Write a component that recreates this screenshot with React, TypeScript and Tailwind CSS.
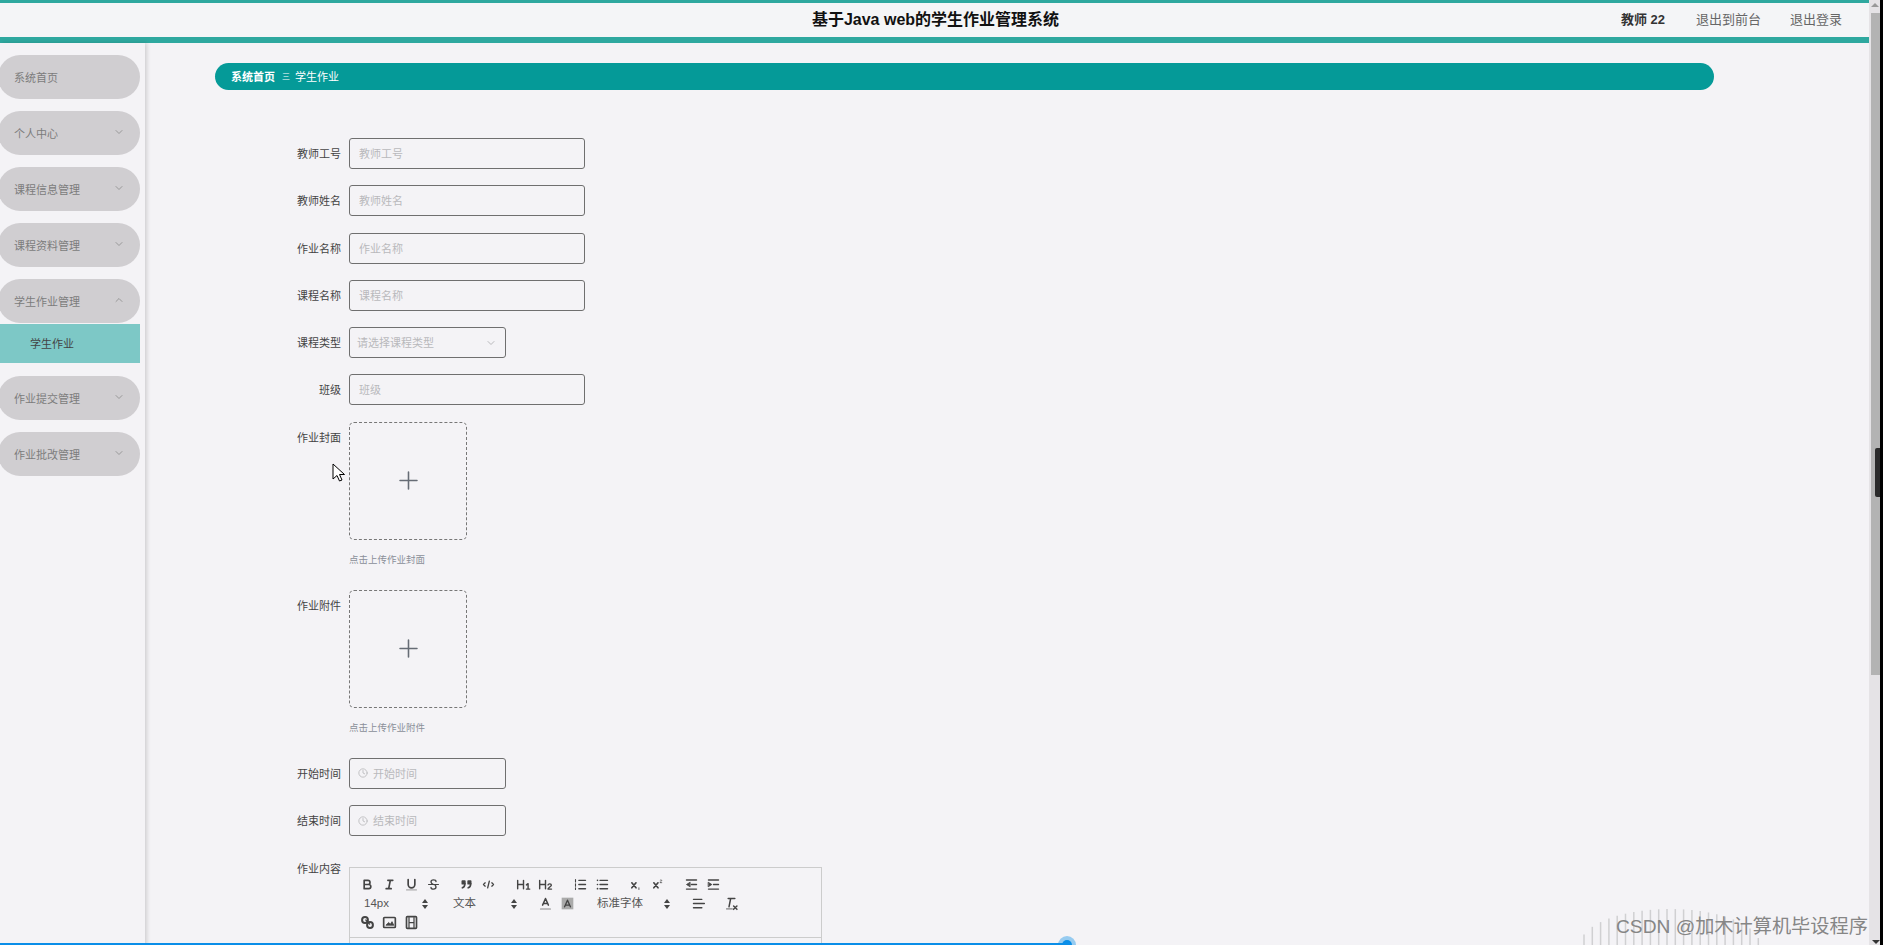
import { ChevronDown, ChevronUp, Clock, Plus } from 'lucide-react';
import type { ReactNode } from 'react';

const cjk = { fontFamily: '"Liberation Sans", "Noto Sans CJK SC", sans-serif' };

const menus = [
  { label: '系统首页' },
  { label: '个人中心', arrow: true },
  { label: '课程信息管理', arrow: true },
  { label: '课程资料管理', arrow: true },
  { label: '学生作业管理', arrow: true, open: true, sub: '学生作业' },
  { label: '作业提交管理', arrow: true },
  { label: '作业批改管理', arrow: true },
];

function Ico({ children }: { children: ReactNode }) {
  return (
    <span className="flex h-[19px] w-[22px] items-center justify-center">
      <svg
        viewBox="0 0 18 18"
        className="h-[15px] w-[15px]"
        fill="none"
        stroke="#444"
        strokeWidth="2"
        strokeLinecap="round"
        strokeLinejoin="round"
      >
        {children}
      </svg>
    </span>
  );
}

function Group({ children, gap = 'mr-[11px]' }: { children: ReactNode; gap?: string }) {
  return <div className={`flex items-center ${gap}`}>{children}</div>;
}

function Picker({ label, w }: { label: string; w: string }) {
  return (
    <div className={`mr-[11px] flex h-[19px] items-center justify-between pl-2 pr-[6px] text-[11.5px] text-[#555] ${w}`}>
      <span>{label}</span>
      <svg viewBox="0 0 6 10" className="h-[10px] w-[6px]" fill="#444">
        <path d="M3 0 6 4H0zM3 10 0 6h6z" />
      </svg>
    </div>
  );
}

function FormRow({ label, children }: { label: string; children: ReactNode }) {
  return (
    <div className="mb-[16.3px] flex">
      <div className="h-[31px] w-[134px] pr-[8px] text-right text-[11px] leading-[33px] text-[#444]">{label}</div>
      {children}
    </div>
  );
}

function TextInput({ label }: { label: string }) {
  return (
    <FormRow label={label}>
      <input
        placeholder={label}
        className="h-[31px] w-[236px] rounded-[3px] border border-[#6f6f6f] bg-transparent px-[9px] pt-px text-[11px] outline-none placeholder:text-[#b9b9bc]"
      />
    </FormRow>
  );
}

function DateInput({ label }: { label: string }) {
  return (
    <FormRow label={label}>
      <div className="flex h-[31px] w-[157px] items-center rounded-[3px] border border-[#6f6f6f] pl-[8px] text-[11px] text-[#b9b9bc]">
        <Clock size={10} />
        <span className="ml-[5px] pt-px">{label}</span>
      </div>
    </FormRow>
  );
}

function Upload({ label, hint }: { label: string; hint: string }) {
  return (
    <div className="mb-[16px] flex h-[152px]">
      <div className="h-[31px] w-[134px] pr-[8px] text-right text-[11px] leading-[33px] text-[#444]">{label}</div>
      <div>
        <div className="flex h-[118px] w-[118px] items-center justify-center rounded-[5px] border border-dashed border-[#777]">
          <Plus size={29} strokeWidth={1.3} className="text-[#666c75]" />
        </div>
        <div className="mt-[13px] text-[9.5px] leading-[14px] text-[#8a8f99]">{hint}</div>
      </div>
    </div>
  );
}

function Toolbar() {
  return (
    <div className="h-[70px] border-b border-[#ccc] pl-[6px] pt-[7px]">
      <div className="flex">
        <Group>
          <Ico>
            <path d="M5 4h4.5a2.5 2.5 0 0 1 0 5H5zM5 9h5.5a2.5 2.5 0 0 1 0 5H5z" />
          </Ico>
          <Ico>
            <path d="M7 4h6M5 14h6M8 14l2-10" />
          </Ico>
          <Ico>
            <path d="M5 3v6a4 4 0 0 0 8 0V3" />
            <path d="M3 15.5h12" strokeWidth="1" stroke="#888" />
          </Ico>
          <Ico>
            <path d="M3 9h12" strokeWidth="1.2" />
            <path d="M12 5.5C12 4 10.5 3.5 9 3.5S6 4.2 6 6c0 1 .7 2 3 3M6 12.5c0 1.5 1.5 2 3 2s3-.8 3-2.5c0-1-.4-1.6-1-2" strokeWidth="1.6" />
          </Ico>
        </Group>
        <Group gap="mr-[13px]">
          <Ico>
            <rect x="4" y="5" width="3" height="3" fill="#444" />
            <rect x="11" y="5" width="3" height="3" fill="#444" />
            <path d="M7 8c0 4-3 5-3 5M14 8c0 4-3 5-3 5" />
          </Ico>
          <Ico>
            <path d="M5 7 3 9l2 2M13 7l2 2-2 2M10 5 8 13" strokeWidth="1.6" />
          </Ico>
        </Group>
        <Group gap="mr-[13px]">
          <Ico>
            <path d="M2 4v10M9 4v10M2 9h7M12.5 9.5 14.5 8v6.5M12.5 14.5h4" strokeWidth="1.7" />
          </Ico>
          <Ico>
            <path d="M2 4v10M9 4v10M2 9h7M12 9.5c.5-1.7 4-1.7 4 .3 0 1.7-4 2.7-4 4.7h4.2" strokeWidth="1.7" />
          </Ico>
        </Group>
        <Group gap="mr-[9px]">
          <Ico>
            <path d="M7 4h8M7 9h8M7 14h8" strokeWidth="1.7" />
            <path d="M3 3v3M3 8v3M3 13v2" strokeWidth="1.3" />
          </Ico>
          <Ico>
            <path d="M6 4h9M6 9h9M6 14h9" strokeWidth="1.7" />
            <path d="M3 4h.01M3 9h.01M3 14h.01" />
          </Ico>
        </Group>
        <Group gap="mr-[14px]">
          <Ico>
            <path d="M7 7l5 6M12 7l-5 6" strokeWidth="2" />
            <path d="M15.5 13v2" strokeWidth="1" />
          </Ico>
          <Ico>
            <path d="M7 7l5 6M12 7l-5 6" strokeWidth="2" />
            <path d="M14.5 4c.6-.8 2-.5 2 .3 0 .8-2 1.2-2 2.5h2" strokeWidth="0.9" />
          </Ico>
        </Group>
        <Group>
          <Ico>
            <path d="M3 3.5h12M3 14.5h12M9 9h6" strokeWidth="1.7" />
            <path d="M7 6.5 3 9l4 2.5z" fill="#444" strokeWidth="1" />
          </Ico>
          <Ico>
            <path d="M3 3.5h12M3 14.5h12M9 9h6" strokeWidth="1.7" />
            <path d="M3 6.5 7 9l-4 2.5z" fill="#444" strokeWidth="1" />
          </Ico>
        </Group>
      </div>
      <div className="flex">
        <Picker label="14px" w="w-[78px]" />
        <Picker label="文本" w="w-[78px]" />
        <Group>
          <Ico>
            <path d="M5.5 11 9 3l3.5 8M6.4 9h5.200" strokeWidth="1.8" />
            <path d="M3 15.5h12" strokeWidth="1.3" stroke="#888" />
          </Ico>
          <Ico>
            <rect x="2" y="2" width="14" height="14" fill="#aaa" stroke="none" />
            <path d="M5.5 13 9 5l3.5 8M6.4 11h5.200" strokeWidth="1.6" />
          </Ico>
        </Group>
        <Picker label="标准字体" w="w-[87px]" />
        <Group>
          <Ico>
            <path d="M3 4h10M3 9h13M3 14h10" strokeWidth="1.7" />
          </Ico>
        </Group>
        <Group>
          <Ico>
            <path d="M5 3h8M8 3 6 13" strokeWidth="1.8" />
            <path d="M3 15.5h7" strokeWidth="1" />
            <path d="M11.5 12l4 4M15.5 12l-4 4" strokeWidth="1.8" />
          </Ico>
        </Group>
      </div>
      <div className="flex">
        <Ico>
          <path d="M7 6 11.5 11" strokeWidth="1.5" />
          <circle cx="6" cy="6" r="3.5" strokeWidth="2.4" />
          <circle cx="12" cy="12" r="3.5" strokeWidth="2.4" />
        </Ico>
        <Ico>
          <rect x="2" y="3" width="14" height="12" rx="1" />
          <path d="M5 12l3-3 2 2 2-3 2 4z" fill="#444" strokeWidth="1" />
        </Ico>
        <Ico>
          <rect x="3" y="2" width="12" height="14" rx="1" />
          <path d="M6 3v12M12 3v12M6 9h6" strokeWidth="1.5" />
        </Ico>
      </div>
    </div>
  );
}

export default function App() {
  const bars = Array.from({ length: 22 }, (_, i) => {
    const x = 4 + i * 8.3;
    const d = (x - 90) / 90;
    return { x, h: 36 * Math.sqrt(Math.max(0, 1 - d * d)) };
  });

  return (
    <div className="relative flex h-[945px] w-[1883px] overflow-hidden bg-[#f4f3f6]" style={cjk}>
      <div className="flex w-[1869px] flex-col">
        <header className="grid h-[43px] shrink-0 grid-cols-[1fr_auto_1fr] items-center border-t-[3px] border-b-[6px] border-[#2ea89f] bg-[#f4f5f7]">
          <div />
          <div className="pl-[2px] text-base font-bold text-[#111]">基于Java web的学生作业管理系统</div>
          <div className="flex justify-end pr-[27px] text-[13px]">
            <span className="mr-[31px] font-bold text-[#333]">教师 22</span>
            <span className="mr-[29px] text-[#666]">退出到前台</span>
            <span className="text-[#666]">退出登录</span>
          </div>
        </header>
        <div className="flex flex-1">
          <aside className="w-[145px] shrink-0 pt-[12px] shadow-[2px_0_4px_rgba(0,0,0,0.15)]">
            {menus.map((m) => (
              <div key={m.label}>
                <div className="mb-[12px] -ml-[2px] flex h-[44px] w-[142px] items-center justify-between rounded-[22px] bg-[#d0ced1] pl-[16px] pr-[15px] text-[11px] text-[#7c7c7c]">
                  <span className="pt-[2px]">{m.label}</span>
                  {m.arrow && (m.open ? <ChevronUp size={12} className="mb-[3px] text-[#999]" /> : <ChevronDown size={12} className="mb-[3px] text-[#999]" />)}
                </div>
                {m.sub && (
                  <div className="-mt-[11px] mb-[13px] flex h-[39px] w-[140px] items-center bg-[#7dc8c6] pl-[30px] pt-[2px] text-[11px] text-[#444]">
                    {m.sub}
                  </div>
                )}
              </div>
            ))}
          </aside>
          <main className="flex-1 pl-[70px] pt-[20px]">
            <div className="flex h-[27px] w-[1499px] items-center rounded-[14px] bg-[#059a98] pl-[16px] text-[11px] text-white">
              <span className="pt-px font-bold">系统首页</span>
              <span className="ml-[7px] mr-[5px] text-[8px]">三</span>
              <span className="pt-px">学生作业</span>
            </div>
            <form className="pt-[48px]">
              <TextInput label="教师工号" />
              <TextInput label="教师姓名" />
              <TextInput label="作业名称" />
              <TextInput label="课程名称" />
              <FormRow label="课程类型">
                <div className="flex h-[31px] w-[157px] items-center justify-between rounded-[3px] border border-[#6f6f6f] pl-[7px] pr-[8px] text-[11px] text-[#b9b9bc]">
                  <span className="pt-px">请选择课程类型</span>
                  <ChevronDown size={12} />
                </div>
              </FormRow>
              <TextInput label="班级" />
              <Upload label="作业封面" hint="点击上传作业封面" />
              <Upload label="作业附件" hint="点击上传作业附件" />
              <DateInput label="开始时间" />
              <DateInput label="结束时间" />
              <div className="mt-[31px] flex">
                <div className="-mt-[6px] w-[134px] pr-[8px] text-right text-[11px] text-[#444]">作业内容</div>
                <div className="h-[300px] w-[473px] border border-[#ccc]">
                  <Toolbar />
                </div>
              </div>
            </form>
          </main>
        </div>
      </div>
      <div className="flex w-[11px] flex-col items-end bg-[#e5e3e6]">
        <svg viewBox="0 0 8 4" className="mx-auto mt-[3px] h-[4px] w-[8px]" fill="#999">
          <path d="M4 0 8 4H0z" />
        </svg>
        <div className="mt-[6px] flex h-[662px] w-[9px] justify-end bg-[#b3b3b3]">
          <div className="mt-[435px] h-[49px] w-[5px] rounded-l-[2px] bg-[#2a2a2a]" />
        </div>
      </div>
      <div className="w-[3px] bg-black" />

      {/* overlays */}
      <svg className="absolute left-[332px] top-[463px] h-[20px] w-[14px]" viewBox="0 0 14 20">
        <path d="M1 1v15l4-3.5 2.5 5.5 2.5-1-2.5-5.5h5z" fill="#fff" stroke="#000" strokeWidth="1" />
      </svg>
      <svg className="absolute left-[1580px] top-[905px] h-[40px] w-[190px]" viewBox="0 0 190 40">
        {bars.map((b) => (
          <line key={b.x} x1={b.x} x2={b.x} y1={40 - b.h} y2="40" stroke="#d0d0d2" strokeWidth="1.5" />
        ))}
      </svg>
      <div className="absolute left-[1616px] top-[913px] text-[19.2px] leading-[28px] text-[#868686]">CSDN @加木计算机毕设程序</div>
      <svg viewBox="0 0 8 4" className="absolute left-[1872px] top-[940px] h-[4px] w-[8px]" fill="#333">
        <path d="M0 0h8L4 4z" />
      </svg>
      <div className="absolute bottom-0 left-0 h-[2px] w-[1067px] bg-[#0a8ee8]" />
      <div className="absolute left-[1058px] top-[936px] h-[18px] w-[18px] rounded-full bg-[#0a8ee8]/40" />
      <div className="absolute left-[1062px] top-[940px] h-[10px] w-[10px] rounded-full bg-[#0a8ee8]" />
    </div>
  );
}
